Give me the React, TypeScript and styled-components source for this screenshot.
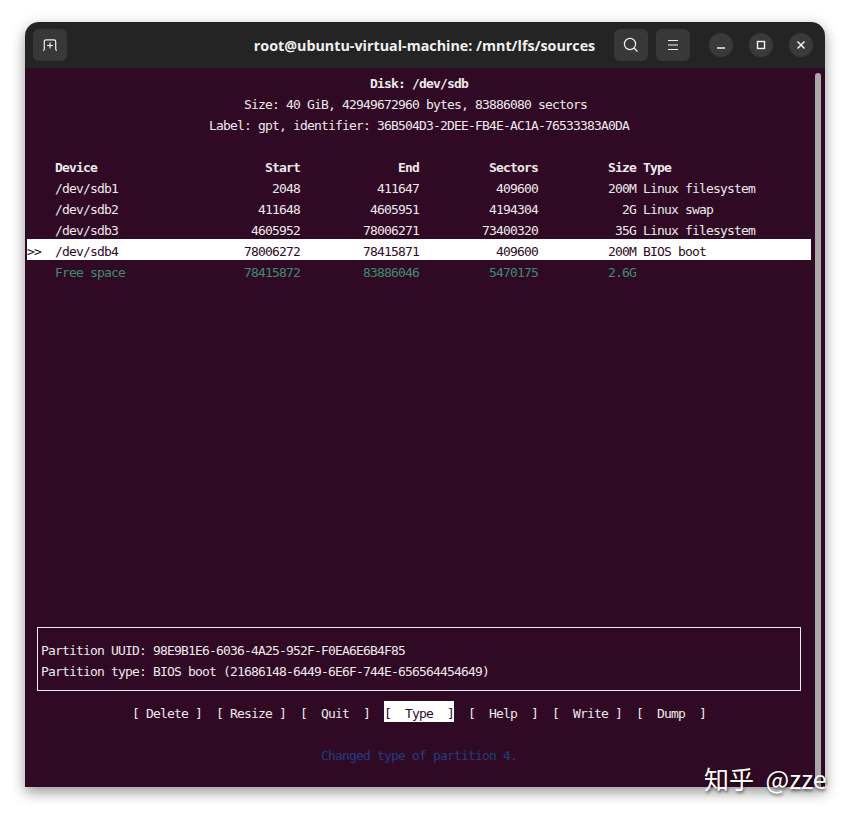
import * as React from 'react';
import styled, { createGlobalStyle } from 'styled-components';

const GlobalStyle = createGlobalStyle`
  html, body {
    margin: 0;
    background: #fff;
  }
`;

const Page = styled.div`
  position: relative;
  width: 850px;
  height: 815px;
  padding: 22px 25px 28px;
  box-sizing: border-box;
  overflow: hidden;
`;

const Window = styled.div`
  width: 800px;
  height: 765px;
  display: flex;
  flex-direction: column;
  border-radius: 14px 14px 0 0;
  overflow: hidden;
  box-shadow: 0 5px 14px rgba(0, 0, 0, 0.42);
`;

const TitleBar = styled.header`
  height: 46px;
  flex: none;
  display: grid;
  grid-template-columns: 1fr auto 1fr;
  align-items: center;
  padding: 0 12px 0 8px;
  background: #242424;
`;

const Title = styled.div`
  padding-left: 3px;
  font: 700 14.3px 'Open Sans', 'Noto Sans', sans-serif;
  color: #f0f0f0;
  white-space: nowrap;
`;

const BarGroup = styled.div<{ $start?: boolean }>`
  display: flex;
  align-items: center;
  justify-content: ${p => (p.$start ? 'flex-start' : 'flex-end')};
`;

const HeaderButton = styled.div<{ $last?: boolean }>`
  width: 34px;
  height: 32px;
  display: flex;
  align-items: center;
  justify-content: center;
  margin-right: ${p => (p.$last ? 3 : 8)}px;
  border-radius: 6px;
  background: #383838;
  color: #f0f0f0;
`;

const ControlButton = styled.div`
  width: 24px;
  height: 24px;
  display: flex;
  align-items: center;
  justify-content: center;
  margin-left: 16px;
  border-radius: 50%;
  background: #3a3a3a;
  color: #f0f0f0;
`;

const Terminal = styled.main`
  position: relative;
  flex: 1;
  display: flex;
  flex-direction: column;
  padding: 3px 0 23px 2px;
  background: #300a24;
  color: #ece8ea;
  font: 13px/25px 'DejaVu Sans Mono', 'Liberation Mono', monospace;
  letter-spacing: -0.826px;
`;

const ScrollThumb = styled.div`
  position: absolute;
  top: 5px;
  bottom: 0;
  right: 4px;
  width: 6px;
  border-radius: 3px 3px 0 0;
  background: #aca5aa;
`;

const Screen = styled.div`
  width: 784px;
  flex: 1;
  display: flex;
  flex-direction: column;
`;

const CenterLine = styled.div<{ $bold?: boolean }>`
  height: 21px;
  text-align: center;
  font-weight: ${p => (p.$bold ? 700 : 400)};
  white-space: pre;
`;

const Table = styled.div`
  margin-top: 21px;
`;

const Row = styled.div<{ $kind?: 'head' | 'selected' | 'free' }>`
  height: 21px;
  display: grid;
  grid-template-columns: 28px 112px 133px 119px 119px 98px 7px 168px;
  white-space: pre;
  font-weight: ${p => (p.$kind === 'head' ? 700 : 400)};
  color: ${p =>
    p.$kind === 'selected' ? '#300a24' : p.$kind === 'free' ? '#3f8a6e' : 'inherit'};
  background: ${p => (p.$kind === 'selected' ? '#fff' : 'transparent')};
`;

const NumCell = styled.span`
  text-align: right;
`;

const TypeCell = styled.span`
  grid-column: 8;
`;

const InfoBox = styled.section`
  margin: auto 0 0 10px;
  width: 764px;
  height: 64px;
  box-sizing: border-box;
  padding: 10px 0 0 3px;
  border: 1px solid #f0ecee;
`;

const InfoLine = styled.div`
  height: 21px;
  white-space: pre;
`;

const Menu = styled.nav`
  display: flex;
  justify-content: center;
  gap: 14px;
  margin-top: 10px;
`;

const MenuItem = styled.span<{ $active?: boolean }>`
  height: 21px;
  white-space: pre;
  color: ${p => (p.$active ? '#300a24' : 'inherit')};
  background: ${p => (p.$active ? '#fff' : 'transparent')};
`;

const Message = styled.div`
  height: 21px;
  margin-top: 21px;
  text-align: center;
  color: #1f3d80;
`;

const Watermark = styled.div`
  position: absolute;
  left: 704px;
  top: 761px;
  font: 400 25px/34px 'Noto Sans CJK SC', 'Noto Sans', sans-serif;
  word-spacing: 6px;
  color: #fff;
  white-space: nowrap;
  text-shadow: 1px 2px 3px rgba(0, 0, 0, 0.55);
`;

const Icon = styled.svg`
  display: block;
  fill: none;
  stroke: currentColor;
  stroke-width: 1.2;
`;

const rows = [
  { device: '/dev/sdb1', start: '2048', end: '411647', sectors: '409600', size: '200M', type: 'Linux filesystem' },
  { device: '/dev/sdb2', start: '411648', end: '4605951', sectors: '4194304', size: '2G', type: 'Linux swap' },
  { device: '/dev/sdb3', start: '4605952', end: '78006271', sectors: '73400320', size: '35G', type: 'Linux filesystem' },
  { device: '/dev/sdb4', start: '78006272', end: '78415871', sectors: '409600', size: '200M', type: 'BIOS boot', kind: 'selected' as const },
  { device: 'Free space', start: '78415872', end: '83886046', sectors: '5470175', size: '2.6G', type: '', kind: 'free' as const },
];

const menu = ['[ Delete ]', '[ Resize ]', '[  Quit  ]', '[  Type  ]', '[  Help  ]', '[  Write ]', '[  Dump  ]'];

export default function App() {
  return (
    <Page>
      <GlobalStyle />
      <Window>
        <TitleBar>
          <BarGroup $start>
            <HeaderButton>
              <Icon width="16" height="16" viewBox="0 0 16 16">
                <path d="M1 13.5c1 0 1.3-.5 1.3-1.5V4.5c0-1 .7-1.7 1.7-1.7h8c1 0 1.7.7 1.7 1.7V12c0 1 .3 1.5 1.3 1.5M8 5.5v6M5 8.5h6" />
              </Icon>
            </HeaderButton>
          </BarGroup>
          <Title>root@ubuntu-virtual-machine: /mnt/lfs/sources</Title>
          <BarGroup>
            <HeaderButton>
              <Icon width="16" height="16" viewBox="0 0 16 16">
                <circle cx="7" cy="7" r="5.6" />
                <path d="M11 11l3.5 3.5" />
              </Icon>
            </HeaderButton>
            <HeaderButton $last>
              <Icon width="16" height="16" viewBox="0 0 16 16">
                <path d="M3 3.5h10M3 8h10M3 12.5h10" />
              </Icon>
            </HeaderButton>
            <ControlButton>
              <Icon width="12" height="12" viewBox="0 0 12 12">
                <path d="M2 9h8" strokeWidth="1.6" />
              </Icon>
            </ControlButton>
            <ControlButton>
              <Icon width="12" height="12" viewBox="0 0 12 12">
                <rect x="2.5" y="2.5" width="7" height="7" strokeWidth="1.4" />
              </Icon>
            </ControlButton>
            <ControlButton>
              <Icon width="12" height="12" viewBox="0 0 12 12">
                <path d="M2.5 2.5l7 7M9.5 2.5l-7 7" strokeWidth="1.5" />
              </Icon>
            </ControlButton>
          </BarGroup>
        </TitleBar>
        <Terminal>
          <ScrollThumb />
          <Screen>
            <CenterLine $bold>Disk: /dev/sdb</CenterLine>
            <CenterLine>{'Size: 40 GiB, 42949672960 bytes, 83886080 sectors '}</CenterLine>
            <CenterLine>Label: gpt, identifier: 36B504D3-2DEE-FB4E-AC1A-76533383A0DA</CenterLine>
            <Table>
              <Row $kind="head">
                <span />
                <span>Device</span>
                <NumCell>Start</NumCell>
                <NumCell>End</NumCell>
                <NumCell>Sectors</NumCell>
                <NumCell>Size</NumCell>
                <TypeCell>Type</TypeCell>
              </Row>
              {rows.map(r => (
                <Row key={r.device} $kind={r.kind}>
                  <span>{r.kind === 'selected' ? '>>' : ''}</span>
                  <span>{r.device}</span>
                  <NumCell>{r.start}</NumCell>
                  <NumCell>{r.end}</NumCell>
                  <NumCell>{r.sectors}</NumCell>
                  <NumCell>{r.size}</NumCell>
                  <TypeCell>{r.type}</TypeCell>
                </Row>
              ))}
            </Table>
            <InfoBox>
              <InfoLine>Partition UUID: 98E9B1E6-6036-4A25-952F-F0EA6E6B4F85</InfoLine>
              <InfoLine>Partition type: BIOS boot (21686148-6449-6E6F-744E-656564454649)</InfoLine>
            </InfoBox>
            <Menu>
              {menu.map(item => (
                <MenuItem key={item} $active={item.includes('Type')}>
                  {item}
                </MenuItem>
              ))}
            </Menu>
            <Message>Changed type of partition 4.</Message>
          </Screen>
        </Terminal>
      </Window>
      <Watermark>知乎 @zze</Watermark>
    </Page>
  );
}
